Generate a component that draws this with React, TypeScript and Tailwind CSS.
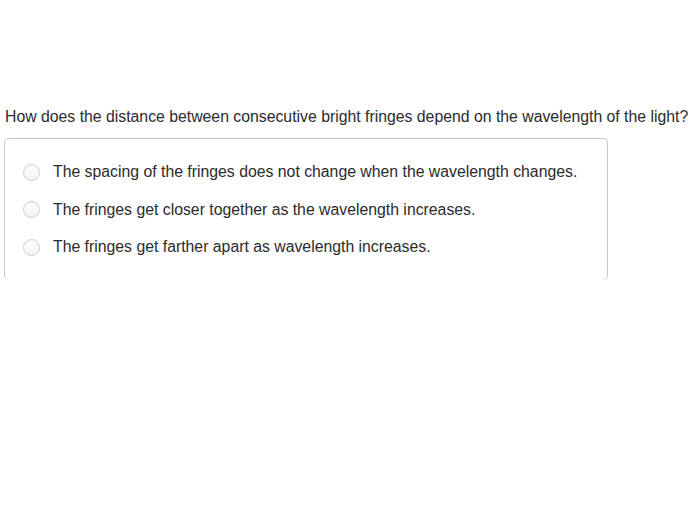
const options = [
  "The spacing of the fringes does not change when the wavelength changes.",
  "The fringes get closer together as the wavelength increases.",
  "The fringes get farther apart as wavelength increases.",
];

function Radio() {
  return (
    <span className="h-[17px] w-[17px] shrink-0 rounded-full border border-[#cfcfcf] bg-gradient-to-b from-white to-[#f3f3f3] shadow-[inset_0_1px_1px_rgba(0,0,0,0.04)]" />
  );
}

export default function App() {
  return (
    <div
      className="min-h-[527px] w-[700px] bg-white pt-[107px] text-[15.8px] text-[#2b2b2b]"
      style={{ fontFamily: '"Liberation Sans", Arial, sans-serif' }}
    >
      <p className="pl-[5px] leading-[20px]">
        How does the distance between consecutive bright fringes depend on the wavelength of the light?
      </p>

      <div className="ml-[4px] mt-[11px] w-[604px] rounded-[5px] border border-b-0 border-[#c8c8c8] pb-[23px] pl-[18px] pt-[23px]">
        <div className="flex flex-col gap-[17.5px]">
          {options.map((text) => (
            <label key={text} className="flex h-[20px] items-center gap-[13px] leading-[20px]">
              <Radio />
              <span>{text}</span>
            </label>
          ))}
        </div>
      </div>
    </div>
  );
}
